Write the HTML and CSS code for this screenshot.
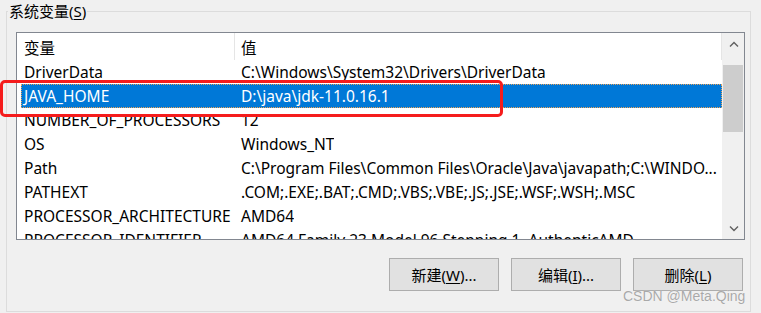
FILE: index.html
```html
<!DOCTYPE html>
<html lang="zh-CN">
<head>
    <meta charset="UTF-8">
    <meta name="viewport" content="width=device-width, initial-scale=1.0">
    <title>系统变量</title>
    <link rel="stylesheet" href="styles.css">
</head>
<body>
    <fieldset class="group">
        <legend class="group-title">系统变量(<u>S</u>)</legend>

        <div class="list">
            <div class="rows">
                <div class="head">
                    <div class="col-name">变量</div>
                    <div class="col-value">值</div>
                </div>
                <div class="row">
                    <div class="col-name">DriverData</div>
                    <div class="col-value">C:\Windows\System32\Drivers\DriverData</div>
                </div>
                <div class="row selected">
                    <div class="col-name">JAVA_HOME</div>
                    <div class="col-value">D:\java\jdk-11.0.16.1</div>
                </div>
                <div class="row">
                    <div class="col-name">NUMBER_OF_PROCESSORS</div>
                    <div class="col-value">12</div>
                </div>
                <div class="row">
                    <div class="col-name">OS</div>
                    <div class="col-value">Windows_NT</div>
                </div>
                <div class="row">
                    <div class="col-name">Path</div>
                    <div class="col-value">C:\Program Files\Common Files\Oracle\Java\javapath;C:\WINDO...</div>
                </div>
                <div class="row">
                    <div class="col-name">PATHEXT</div>
                    <div class="col-value">.COM;.EXE;.BAT;.CMD;.VBS;.VBE;.JS;.JSE;.WSF;.WSH;.MSC</div>
                </div>
                <div class="row">
                    <div class="col-name">PROCESSOR_ARCHITECTURE</div>
                    <div class="col-value">AMD64</div>
                </div>
                <div class="row">
                    <div class="col-name">PROCESSOR_IDENTIFIER</div>
                    <div class="col-value">AMD64 Family 23 Model 96 Stepping 1, AuthenticAMD</div>
                </div>
            </div>

            <div class="scrollbar">
                <div class="arrow">
                    <svg width="10" height="6" viewBox="0 0 10 6"><path d="M1 5.5 L5 1.5 L9 5.5" fill="none" stroke="#606060" stroke-width="1.4"/></svg>
                </div>
                <div class="track">
                    <div class="thumb"></div>
                </div>
                <div class="arrow">
                    <svg width="10" height="6" viewBox="0 0 10 6"><path d="M1 0.5 L5 4.5 L9 0.5" fill="none" stroke="#606060" stroke-width="1.4"/></svg>
                </div>
            </div>
        </div>

        <div class="buttons">
            <button class="btn">新建(<u>W</u>)...</button>
            <button class="btn">编辑(<u>I</u>)...</button>
            <button class="btn">删除(<u>L</u>)</button>
        </div>
    </fieldset>

    <div class="mark"></div>
    <div class="watermark">CSDN @Meta.Qing</div>
</body>
</html>
```

FILE: styles.css
```css
body {
    margin: 0;
    height: 313px;
    overflow: hidden;
    background: #f0f0f0;
    font-family: "Noto Sans", "Noto Sans CJK SC", sans-serif;
    font-size: 15px;
    color: #000;
}

.group {
    margin: 0 10px 0 6px;
    padding: 0 5px 20px 0;
    min-width: 0;
    border: 1px solid #dcdcdc;
}

.group-title {
    margin-left: 1px;
    padding: 0 1px;
    line-height: 22px;
}

u {
    text-decoration-thickness: 1px;
    text-underline-offset: 2px;
}

/* list view */
.list {
    display: flex;
    margin: 10px 0 0 9px;
    width: 729px;
    height: 208px;
    box-sizing: border-box;
    border: 1px solid #828790;
    background: #fff;
    font-size: 15.5px;
}

.rows {
    flex: 1;
    overflow: hidden;
}

.head, .row {
    display: flex;
    white-space: nowrap;
}

.head {
    height: 27px;
    align-items: center;
    padding-left: 4px;
}

.head .col-name {
    border-right: 1px solid #e5e5e5;
    height: 27px;
    line-height: 31px;
}

.head .col-value {
    flex: 1;
    height: 27px;
    line-height: 31px;
    border-right: 1px solid #e5e5e5;
}

.row {
    height: 24px;
    line-height: 24px;
    margin-left: 4px;
}

.col-name {
    width: 214px;
    box-sizing: border-box;
    padding-left: 3px;
    overflow: hidden;
}

.col-value {
    padding-left: 6px;
    overflow: hidden;
}

.row.selected {
    background: #0078d7;
    color: #fff;
    outline: 1px dotted #e9a25a;
    outline-offset: -1px;
}

/* scrollbar */
.scrollbar {
    width: 22px;
    display: flex;
    flex-direction: column;
    background: #f0f0f0;
}

.arrow {
    height: 21px;
    display: flex;
    align-items: center;
    justify-content: center;
    padding-left: 1px;
}

.track {
    flex: 1;
    padding: 11px 1px 0 1px;
}

.thumb {
    height: 67px;
    background: #cdcdcd;
}

/* buttons */
.buttons {
    display: flex;
    justify-content: flex-end;
    gap: 12px;
    margin-top: 18px;
    padding-right: 2px;
}

.btn {
    width: 110px;
    height: 33px;
    margin: 0;
    background: #e1e1e1;
    border: 1px solid #adadad;
    font-family: inherit;
    font-size: 15px;
    color: #000;
}

/* screenshot annotations */
.mark {
    position: absolute;
    left: 0;
    top: 80px;
    width: 503px;
    height: 37px;
    box-sizing: border-box;
    border: 3px solid #f51c1c;
    border-radius: 5px;
}

.watermark {
    position: absolute;
    left: 623px;
    top: 288px;
    font-family: "Liberation Sans", sans-serif;
    font-size: 14px;
    color: #a9a9a9;
    text-shadow: 0 0 1px #fff;
}
```
